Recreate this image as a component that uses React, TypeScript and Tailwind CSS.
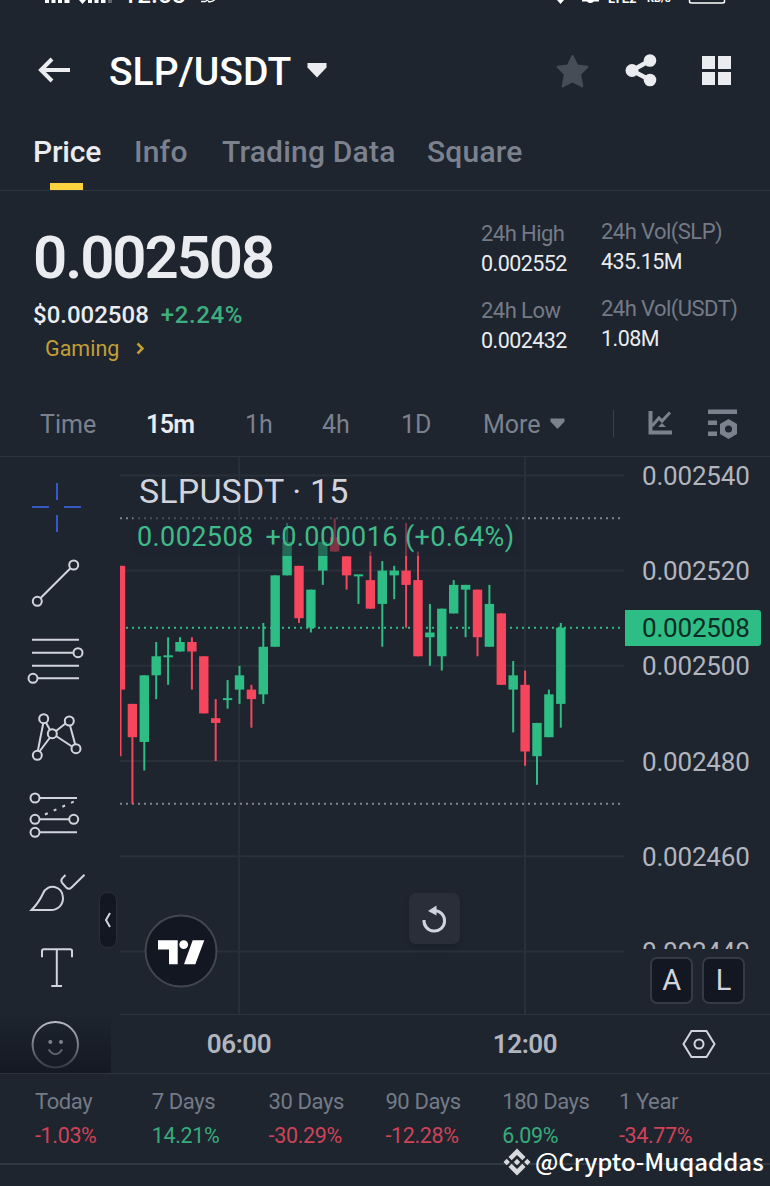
import type React from 'react'

type Candle = [open: number, high: number, low: number, close: number]

// Prices in millionths of a USDT, one candle per 15 minutes
const candles: Candle[] = [
  [2521, 2521, 2481, 2495],
  [2492, 2492, 2471, 2485],
  [2484, 2498, 2478, 2498],
  [2498, 2505, 2493, 2502],
  [2502, 2506, 2496, 2502],
  [2503, 2506, 2503, 2505],
  [2505, 2506, 2495, 2503],
  [2502, 2502, 2490, 2490],
  [2489, 2493, 2480, 2488],
  [2493, 2497, 2491, 2493],
  [2495, 2500, 2492, 2498],
  [2495, 2496, 2487, 2493],
  [2494, 2509, 2492, 2504],
  [2504, 2519, 2504, 2519],
  [2519, 2530, 2519, 2526],
  [2521, 2521, 2509, 2510],
  [2508, 2516, 2507, 2516],
  [2520, 2526, 2517, 2526],
  [2527, 2531, 2524, 2524],
  [2523, 2523, 2516, 2519],
  [2519, 2519, 2513, 2519],
  [2518, 2524, 2512, 2512],
  [2513, 2522, 2504, 2520],
  [2519, 2521, 2514, 2520],
  [2520, 2530, 2508, 2517],
  [2518, 2524, 2502, 2502],
  [2506, 2513, 2500, 2507],
  [2502, 2512, 2499, 2512],
  [2511, 2518, 2511, 2517],
  [2516, 2517, 2506, 2517],
  [2516, 2516, 2502, 2506],
  [2504, 2517, 2504, 2513],
  [2511, 2511, 2496, 2496],
  [2495, 2501, 2486, 2498],
  [2496, 2499, 2479, 2482],
  [2481, 2488, 2475, 2488],
  [2485, 2495, 2485, 2494],
  [2492, 2509, 2487, 2508]
]

const tabs = ['Price', 'Info', 'Trading Data', 'Square']
const gridPrices = [2540, 2520, 2500, 2480, 2460, 2440]

const periods = [
  { label: 'Today', value: '-1.03%' },
  { label: '7 Days', value: '14.21%' },
  { label: '30 Days', value: '-30.29%' },
  { label: '90 Days', value: '-12.28%' },
  { label: '180 Days', value: '6.09%' },
  { label: '1 Year', value: '-34.77%' }
]

const TICK = 4.76
const STEP = 11.9
const priceToY = (price: number): number => 18.4 + (2540 - price) * TICK

function StatusBar(): React.JSX.Element {
  return (
    <div className="relative h-2 overflow-hidden text-white">
      <svg className="absolute left-0 top-0" width="770" height="8" fill="currentColor">
        <path d="M45 0h4v3h-4zM51.500 0h4v3h-4zM58 0h4v3h-4zM64.500 0h5v3h-5zM79 0h7l-3.500 4zM88 0h4v3h-4zM94.500 0h4v3h-4zM101 0h4.500v3H101z" />
        <path d="M108 0h4v3h-4z" opacity=".3" />
        <path d="M201 1.500h4l4-2M208 1.500q4 1 7-2" stroke="currentColor" strokeWidth="1.300" fill="none" />
        <path d="M557 0h7l-3.500 4zM582 0h17v1.500h-5q-4 3-7 0h-5z" />
        <path d="M689.500 0v1.500q0 1.500 2 1.500h31q2 0 2-1.500V0" fill="none" stroke="currentColor" strokeWidth="1.500" />
      </svg>
      <span className="absolute left-[123px] top-[-19px] text-[24px] leading-[28px] font-medium tracking-[0.5px]">
        12:53
      </span>
      <span className="absolute left-[608px] top-[-9px] text-[13px] leading-[15px] font-bold">LTE2</span>
      <span className="absolute left-[647px] top-[-8px] text-[11px] leading-[14px] font-bold">KB/s</span>
    </div>
  )
}

function Header(): React.JSX.Element {
  return (
    <header className="flex h-[125px] items-center pl-[37px] pr-[39px] text-[#eaecef]">
      <svg className="-mt-px" width="34" height="26" fill="none" stroke="currentColor" strokeWidth="4">
        <path d="M15 2 4 13l11 11M4 13h29" />
      </svg>
      <h1 className="ml-[38px] mt-[4px] w-[181px] whitespace-nowrap text-[39px] font-medium text-white">
        SLP/USDT
      </h1>
      <svg className="-mt-px ml-[17px]" width="20" height="16" fill="currentColor">
        <path d="M.5 1h19v4.500L10 15.500.5 5.500z" />
      </svg>
      <svg
        className="ml-auto text-[#474d57]"
        width="33"
        height="34"
        fill="currentColor"
        stroke="currentColor"
        strokeWidth="2"
        strokeLinejoin="round"
      >
        <path d="m16.500 2 4.600 9.500 10.300 1.300-7.300 7.600 2.200 12-9.800-5-9.800 5 2.200-12-7.300-7.600 10.300-1.300z" />
      </svg>
      <svg className="-mt-[2px] ml-[36px]" width="32" height="34" fill="currentColor">
        <path d="M25 7.500 7 17.500l18 9.500" fill="none" stroke="currentColor" strokeWidth="4.500" />
        <circle cx="25" cy="7.500" r="6.300" />
        <circle cx="7" cy="17.500" r="6.500" />
        <circle cx="25" cy="27" r="6.300" />
      </svg>
      <div className="-mt-px ml-[45px] grid grid-cols-2 gap-[3px]">
        {[0, 1, 2, 3].map((i) => (
          <span key={i} className="size-[13px] bg-[#eaecef]" />
        ))}
      </div>
    </header>
  )
}

function Tabs(): React.JSX.Element {
  return (
    <nav className="grid h-[58px] grid-cols-[100px_88px_205px_auto] border-b border-[#2e343e] pl-[34px] text-[30px] font-medium leading-[38px]">
      {tabs.map((tab, i) => (
        <div
          key={tab}
          className={i === 0 ? 'relative -ml-px tracking-[-0.2px] text-[#eaecef]' : 'tracking-[0.2px] text-[#7c818e]'}
        >
          <span className="whitespace-nowrap">{tab}</span>
          {i === 0 && <span className="absolute bottom-0 left-[17px] h-[7px] w-[33px] bg-[#fcd33f]" />}
        </div>
      ))}
    </nav>
  )
}

function Stat({ label, value }: { label: string; value: string }): React.JSX.Element {
  return (
    <div className="whitespace-nowrap leading-[30px]">
      <div className="text-[22px] tracking-[-0.55px] text-[#747a86]">{label}</div>
      <div className="text-[21.5px] tracking-[-0.55px] text-[#eaecef]">{value}</div>
    </div>
  )
}

function Summary(): React.JSX.Element {
  return (
    <section className="flex h-[200px]">
      <div className="w-[481px] pl-[33px] pt-[32px]">
        <div className="text-[60px] font-semibold leading-[69px] tracking-[-2.1px] text-[#eaecef]">
          0.002508
        </div>
        <div className="flex h-[45px] gap-3 pt-px text-[24px] font-medium leading-[45px]">
          <span className="text-[#eaecef]">$0.002508</span>
          <span className="tracking-[0.6px] text-[#3dae7d]">+2.24%</span>
        </div>
        <div className="flex items-center pl-3 text-[21.5px] leading-[23px] text-[#c29f35]">
          Gaming
          <svg className="ml-[17px]" width="9" height="13" fill="none" stroke="currentColor" strokeWidth="2.500">
            <path d="m1.500 1.500 5 5-5 5" />
          </svg>
        </div>
      </div>
      <div className="flex w-[120px] flex-col gap-[17px] pt-[28px]">
        <Stat label="24h High" value="0.002552" />
        <Stat label="24h Low" value="0.002432" />
      </div>
      <div className="flex flex-col gap-[17px] pt-[26px]">
        <Stat label="24h Vol(SLP)" value="435.15M" />
        <Stat label="24h Vol(USDT)" value="1.08M" />
      </div>
    </section>
  )
}

function IntervalBar(): React.JSX.Element {
  return (
    <div className="grid h-[66px] grid-cols-[106px_99px_77px_79px_82px_67px_63px_35px_60px_auto] items-center border-b border-[#2e343e] pl-[40px] pt-[3px] text-[25px] text-[#7c818e]">
      <span>Time</span>
      <span className="font-semibold tracking-[-0.6px] text-[#eaecef]">15m</span>
      <span>1h</span>
      <span>4h</span>
      <span>1D</span>
      <span>More</span>
      <svg className="-mt-1" width="15" height="11" fill="currentColor">
        <path d="M.5.5h14v3L8 10.500H7L.5 3.500z" />
      </svg>
      <span className="-mt-[3px] h-[27px] w-px bg-[#3a404b]" />
      <svg className="-mt-[4px]" width="24" height="24" fill="none" stroke="currentColor" strokeWidth="4">
        <path d="M2.500 0v21.500H24" />
        <path d="m4 15 7-8 3 3 8-8.500" strokeWidth="3" />
        <path d="m10 16 4-4 4 4z" fill="currentColor" stroke="none" />
      </svg>
      <svg className="-mt-[3px]" width="30" height="30" fill="currentColor">
        <path d="M0 .5h29V5H0zM0 11.500h9V16H0zM0 22.500h9V27H0z" />
        <path
          fillRule="evenodd"
          d="m20.500 10 8.500 5v10l-8.500 5-8.500-5V15zm0 6.500a3.500 3.500 0 1 0 0 7 3.500 3.500 0 0 0 0-7z"
        />
      </svg>
    </div>
  )
}

const tools: { name: string; art: React.JSX.Element }[] = [
  {
    name: 'crosshair',
    art: <path d="M30 5v17M30 37v17M5 29h17M37 29h17" stroke="#3259c4" strokeWidth="2" />
  },
  {
    name: 'trend-line',
    art: (
      <>
        <circle cx="46.700" cy="10" r="4.500" />
        <circle cx="10.300" cy="46.300" r="4.500" />
        <path d="M13.600 43 43.400 13.300" />
      </>
    )
  },
  {
    name: 'fibonacci',
    art: (
      <>
        <path d="M5 7.700h47M5 20.700h41.500M5 33.700h47M10.500 46.300H52" />
        <circle cx="51" cy="20.700" r="4.500" />
        <circle cx="6" cy="46.300" r="4.500" />
      </>
    )
  },
  {
    name: 'pattern',
    art: (
      <>
        <path d="M16.300 14 10.800 42M19 13.500l4 7.500M12.500 42.500 23 28.500M29 22l9.500-7.500M29 27l16 10.500M43 16.500l5.200 19" />
        <circle cx="16.700" cy="9.700" r="4.500" />
        <circle cx="42.300" cy="12" r="4.500" />
        <circle cx="25.300" cy="24.700" r="4.500" />
        <circle cx="10.300" cy="46.300" r="4.500" />
        <circle cx="49" cy="39.700" r="4.500" />
      </>
    )
  },
  {
    name: 'forecast',
    art: (
      <>
        <path d="M12.500 12H50M12.500 33.300h30M12.500 46.300H50" />
        <path d="m18 28.500 29-13" strokeDasharray="3 6.500" />
        <circle cx="8" cy="12" r="4.500" />
        <circle cx="8" cy="33.300" r="4.500" />
        <circle cx="46.700" cy="33.300" r="4.500" />
        <circle cx="8" cy="46.300" r="4.500" />
      </>
    )
  },
  {
    name: 'brush',
    art: (
      <>
        <path d="M4.500 47C10 41.500 13 37 16 30.500 20.500 19.500 36 22.500 36 35c0 7-5 12-12 12z" />
        <path d="m38.500 12-3.300 3.300q-1.800 2.200 0 4.500l4.300 5q2.500 2 5-.3L57.500 11.700" />
      </>
    )
  },
  {
    name: 'text',
    art: <path d="M15 17.300V11q0-1.700 1.700-1.700h26.600q1.700 0 1.700 1.700v6.300M29.800 9.300V46M24.300 46H35" />
  },
  {
    name: 'emoji',
    art: (
      <>
        <circle cx="28.300" cy="27.700" r="22.700" />
        <circle cx="23.300" cy="25" r="2" fill="currentColor" stroke="none" />
        <circle cx="34" cy="25" r="2" fill="currentColor" stroke="none" />
        <path d="M21.700 32.500q6.700 9.500 13.400 0" />
      </>
    )
  }
]

function DrawingToolbar(): React.JSX.Element {
  return (
    <aside className="relative h-[616px] w-[111px] overflow-hidden pl-[27px] pt-[11px] text-[#d1d4dc]">
      {tools.map((tool) => (
        <div key={tool.name} className="flex h-[77px] items-center">
          <svg width="60" height="58" fill="none" stroke="currentColor" strokeWidth="2">
            {tool.art}
          </svg>
        </div>
      ))}
      {/* Scroll fade */}
      <div className="absolute bottom-0 left-0 h-[60px] w-full bg-linear-to-b from-[#131722]/0 to-[#131722]/90" />
    </aside>
  )
}

function CandleChart(): React.JSX.Element {
  return (
    <svg className="block" width="504" height="557">
      <g stroke="#2a303a" strokeWidth="2">
        {gridPrices.map((price) => (
          <path key={price} d={`M0 ${priceToY(price)}H504`} />
        ))}
        <path d="M119.200 0V557M405 0V557" />
      </g>
      <g strokeWidth="2" strokeDasharray="2 4">
        <path d={`M0 ${priceToY(2531)}H504`} stroke="#80858f" />
        <path d={`M0 ${priceToY(2471)}H504`} stroke="#80858f" />
        <path d={`M0 ${priceToY(2508)}H504`} stroke="#2ebd85" />
      </g>
      {candles.map(([open, high, low, close], i) => {
        const color = close >= open ? '#2ebd85' : '#f6465d'
        const x = 0.5 + i * STEP
        const bodyTop = priceToY(Math.max(open, close))
        const bodyHeight = Math.abs(open - close) * TICK
        return (
          <g key={i} fill={color}>
            <rect x={x - 1} y={priceToY(high)} width="2" height={(high - low) * TICK} />
            <rect
              x={x - 4.7}
              y={bodyHeight ? bodyTop : bodyTop - 1}
              width="9.400"
              height={Math.max(bodyHeight, 2)}
            />
          </g>
        )
      })}
    </svg>
  )
}

function PriceAxis(): React.JSX.Element {
  return (
    <div className="relative h-[557px] w-[146px] text-[26px] tracking-[-0.2px] text-[#b2b5be]">
      <div className="h-[492px] overflow-hidden pl-[18px]">
        <div className="-mt-[28px]">
          {gridPrices.map((price) => (
            <div key={price} className="flex h-[95.2px] items-center">
              0.00{price}
            </div>
          ))}
        </div>
      </div>
      {/* Last traded price */}
      <div className="absolute left-[1px] top-[153px] flex h-[36px] w-[136px] items-center rounded-r-[3px] bg-[#2ebd85] pl-[17px] pt-px text-[#0d2b22]">
        0.002508
      </div>
      <div className="flex gap-[9px] pl-[26px] pt-[8px] text-[29px] text-[#d1d4dc]">
        <button className="flex h-[47px] w-[43px] items-center justify-center rounded-[7px] border-2 border-[#363a45] bg-[#131722]">
          A
        </button>
        <button className="flex h-[47px] w-[43px] items-center justify-center rounded-[7px] border-2 border-[#363a45] bg-[#131722]">
          L
        </button>
      </div>
    </div>
  )
}

function TimeAxis(): React.JSX.Element {
  return (
    <div className="ml-[9px] grid h-[59px] grid-cols-[238px_334px_auto] items-center border-t border-[#2e343e] text-[26px] font-semibold tracking-[-0.4px] text-[#b2b5be]">
      <span className="text-center">06:00</span>
      <span className="text-center">12:00</span>
      <svg className="-ml-[10px]" width="34" height="30" fill="none" stroke="#d1d4dc" strokeWidth="2">
        <path d="M9.500 2h15L32.500 15 24.500 28h-15L1.500 15z" />
        <circle cx="17" cy="15" r="4.500" />
      </svg>
    </div>
  )
}

function Chart(): React.JSX.Element {
  return (
    <section className="relative flex h-[616px]">
      <DrawingToolbar />
      <div className="w-[659px]">
        <div className="flex pl-[9px]">
          <div className="relative">
            <CandleChart />
            <div className="absolute left-[19px] top-[14px] whitespace-nowrap text-[34px] leading-[40px] tracking-[0.15px] text-[#d1d4dc]">
              SLPUSDT · 15
            </div>
            <div className="absolute left-[13px] top-[59px] flex h-[40px] items-center gap-[12px] whitespace-nowrap bg-[#1e252f]/55 px-1 pt-[3px] text-[27px] tracking-[0.4px] text-[#3fbb8a]">
              <span>0.002508</span>
              <span>+0.000016 (+0.64%)</span>
            </div>
            {/* TradingView badge */}
            <svg className="absolute left-[24px] top-[457px]" width="74" height="74">
              <circle cx="37" cy="37" r="35.500" fill="#131722" stroke="#434651" strokeWidth="2" />
              <path
                d="M14 26.300h19.700v24H25V35.500H14zM48.700 26.300h11.600l-9 24H40z"
                fill="#fff"
              />
              <circle cx="39.700" cy="30.600" r="4.400" fill="#fff" />
            </svg>
            <button className="absolute left-[289px] top-[436px] size-[51px] rounded-[7px] bg-[#2a2e39] text-[#d1d4dc] shadow-md">
              <svg width="51" height="51" fill="none" stroke="currentColor" strokeWidth="3">
                <path d="M15 27a10.300 10.300 0 1 0 11-9.500" />
                <path d="m19 18 8.500-5.500v10z" fill="currentColor" stroke="none" />
              </svg>
            </button>
          </div>
          <PriceAxis />
        </div>
        <TimeAxis />
      </div>
      {/* Toolbar collapse handle */}
      <button className="absolute left-[99px] top-[435px] flex h-[56px] w-[18px] items-center justify-center rounded-[8px] border border-[#2a2e39] bg-[#131722] text-[#d1d4dc]">
        <svg width="8" height="18" fill="none" stroke="currentColor" strokeWidth="2">
          <path d="M6 2 2 9l4 7" />
        </svg>
      </button>
    </section>
  )
}

function Performance(): React.JSX.Element {
  return (
    <footer className="h-[92px] border-b-2 border-t border-t-[#2e343e] border-b-[#323842] pl-[35px] pt-[11px]">
      <div className="grid grid-cols-[repeat(6,116.8px)] whitespace-nowrap">
        {periods.map(({ label, value }) => (
          <div key={label} className="leading-[34px]">
            <div className="text-[22px] tracking-[-0.4px] text-[#747a86]">{label}</div>
            <div
              className={`text-[21.500px] tracking-[-0.35px] ${value.startsWith('-') ? 'text-[#cf4257]' : 'text-[#36ab7b]'}`}
            >
              {value}
            </div>
          </div>
        ))}
      </div>
    </footer>
  )
}

function Watermark(): React.JSX.Element {
  return (
    <div className="absolute left-[503px] top-[1146px] flex h-[32px] items-center gap-[4px] text-white">
      <svg width="28" height="28" viewBox="0 0 28 28" fill="#d8d9dc">
        <path d="m14 .5 8.500 8.500-3.200 3.200L14 6.900l-5.300 5.300L5.500 9zM14 27.500 5.500 19l3.200-3.200 5.300 5.300 5.300-5.300 3.200 3.200zM14 10.800l3.200 3.200-3.200 3.200-3.200-3.200zM3.700 10.800 6.900 14l-3.200 3.200L.5 14zM24.300 10.800l3.200 3.200-3.200 3.200-3.200-3.200z" />
      </svg>
      <span className="-mt-[2px] whitespace-nowrap font-['Noto_Sans_CJK_SC',sans-serif] text-[24px] font-medium leading-[24px]">
        @Crypto-Muqaddas
      </span>
    </div>
  )
}

export default function App(): React.JSX.Element {
  return (
    <div className="relative h-[1186px] w-[770px] overflow-hidden bg-[#1e252f] font-[Roboto,'Liberation_Sans',sans-serif]">
      <StatusBar />
      <Header />
      <Tabs />
      <Summary />
      <IntervalBar />
      <Chart />
      <Performance />
      <Watermark />
    </div>
  )
}
